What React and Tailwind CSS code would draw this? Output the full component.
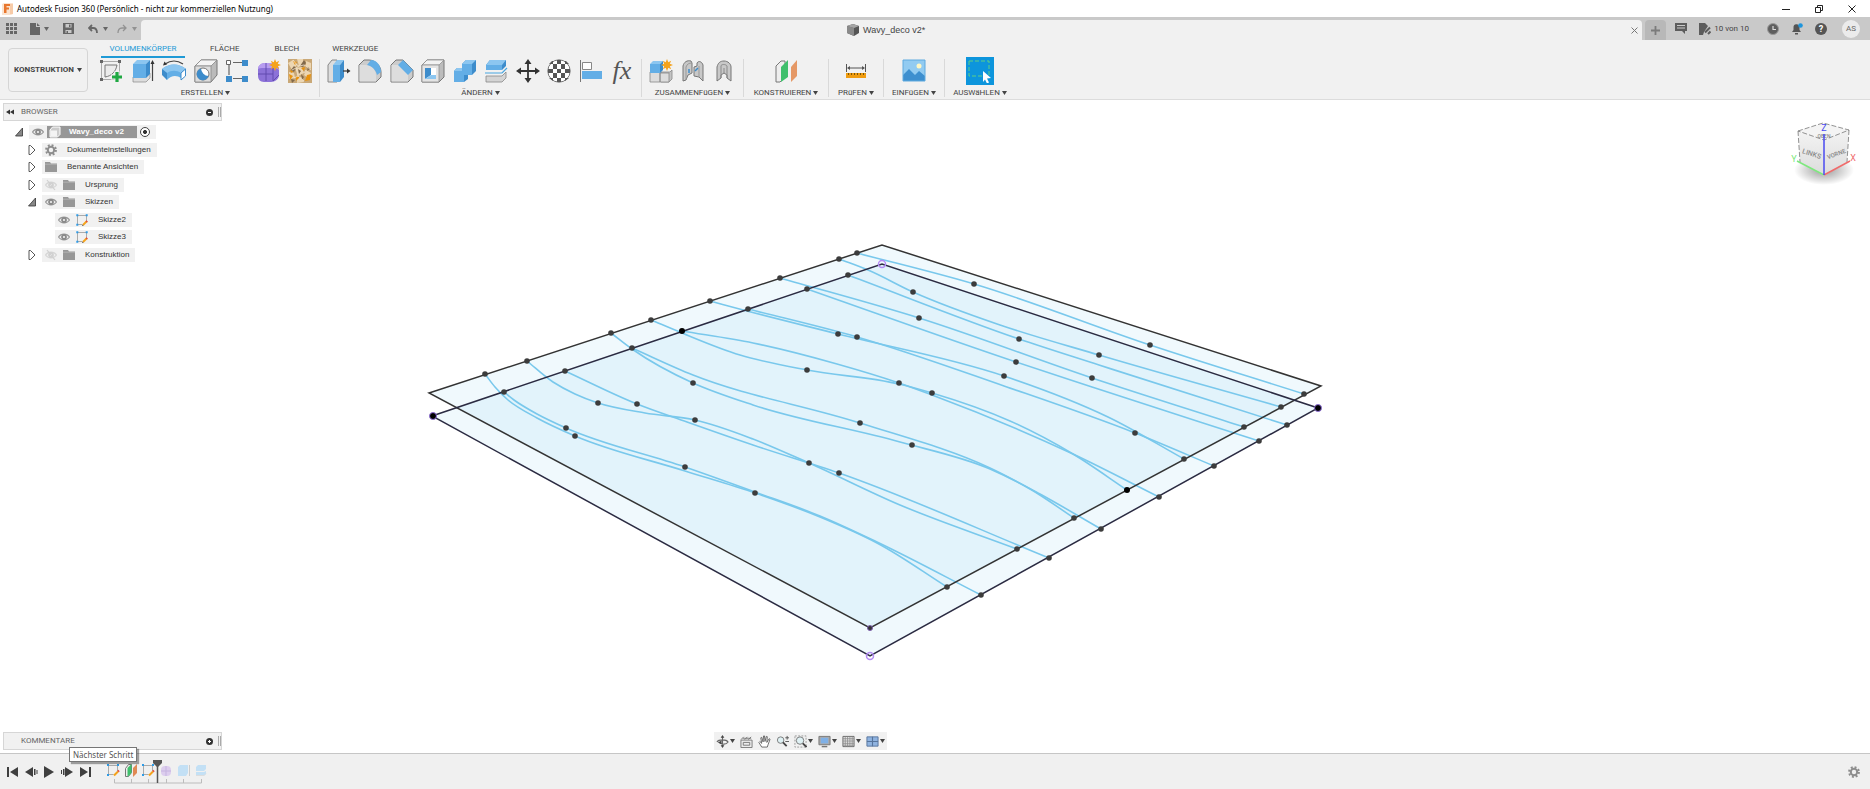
import { Fragment } from "react";

const sketchCurves = [
  // upper profile
  [[485, 374], [495, 387], [508, 400], [537, 418], [575, 436], [685, 471], [755, 493], [820, 517], [877, 543], [947, 587]],
  [[527, 361], [553, 382], [575, 394], [598, 403], [645, 413], [695, 420], [753, 439], [809, 463], [900, 505], [1017, 549]],
  [[611, 333], [632, 349], [693, 383], [753, 405], [900, 442], [990, 469], [1030, 489], [1074, 518]],
  [[651, 320], [682, 333], [740, 355], [807, 370], [899, 384], [932, 393], [1010, 421], [1073, 454], [1127, 490]],
  [[710, 301], [747, 311], [838, 334], [1004, 376], [1108, 417], [1184, 459]],
  [[780, 278], [919, 318], [1092, 378], [1244, 427]],
  [[839, 259], [868, 270], [913, 292], [1000, 325], [1099, 355], [1281, 407]],
  [[857, 253], [974, 284], [1150, 345], [1304, 394]],
  // lower profile
  [[504, 392], [514, 400], [537, 414], [566, 428], [685, 467], [755, 492], [820, 516], [877, 542], [981, 595]],
  [[565, 371], [637, 404], [687, 422], [753, 445], [839, 473], [1049, 558]],
  [[632, 348], [693, 375], [860, 423], [990, 468], [1040, 494], [1101, 529]],
  [[682, 331], [753, 343], [837, 364], [899, 383], [932, 395], [1073, 454], [1159, 497]],
  [[748, 309], [857, 337], [1004, 386], [1135, 433], [1214, 466]],
  [[807, 289], [1016, 362], [1092, 387], [1259, 441]],
  [[848, 275], [1019, 339], [1099, 365], [1287, 425]],
];

const sketchPoints = [
  [485, 374], [527, 361], [611, 333], [651, 320], [710, 301], [780, 278], [839, 259], [857, 253],
  [947, 587], [1017, 549], [1074, 518], [1184, 459], [1244, 427], [1281, 407], [1304, 394],
  [504, 392], [565, 371], [632, 348], [748, 309], [807, 289], [848, 275],
  [981, 595], [1049, 558], [1101, 529], [1159, 497], [1214, 466], [1259, 441], [1287, 425],
  [566, 428], [575, 436], [598, 403], [637, 404], [695, 420], [693, 383], [807, 370], [838, 334], [857, 337],
  [860, 423], [685, 467], [755, 493], [809, 463], [839, 473], [974, 284], [913, 292], [919, 318], [1019, 339],
  [1099, 355], [1150, 345], [1016, 362], [1092, 378], [1004, 376], [899, 383], [932, 393], [1135, 433], [912, 445],
];

// spline through the fit points, tangents weighted by chord length
function splinePath(pts) {
  const dist = (a, b) => Math.hypot(b[0] - a[0], b[1] - a[1]);
  const tangents = pts.map((p, i) => {
    const a = pts[i - 1];
    const b = pts[i + 1];
    if (!a) return [(b[0] - p[0]) / dist(p, b), (b[1] - p[1]) / dist(p, b)];
    if (!b) return [(p[0] - a[0]) / dist(a, p), (p[1] - a[1]) / dist(a, p)];
    const d0 = dist(a, p);
    const d1 = dist(p, b);
    return [0, 1].map((k) => (((p[k] - a[k]) / d0) * d1 + ((b[k] - p[k]) / d1) * d0) / (d0 + d1));
  });
  let d = `M${pts[0][0]} ${pts[0][1]}`;
  for (let i = 1; i < pts.length; i++) {
    const h = dist(pts[i - 1], pts[i]) / 3;
    const c1 = [pts[i - 1][0] + tangents[i - 1][0] * h, pts[i - 1][1] + tangents[i - 1][1] * h];
    const c2 = [pts[i][0] - tangents[i][0] * h, pts[i][1] - tangents[i][1] * h];
    d += `C${c1[0]} ${c1[1]} ${c2[0]} ${c2[1]} ${pts[i][0]} ${pts[i][1]}`;
  }
  return d;
}

const Caret = ({ className = "text-[#444]" }) => (
  <svg className={`w-[5px] h-1 shrink-0 ${className}`} viewBox="0 0 5 4">
    <path d="M0 0h5L2.5 4z" fill="currentColor" />
  </svg>
);

const Svg = ({ children, className = "w-6 h-6", box = "0 0 24 24" }) => (
  <svg className={`shrink-0 ${className}`} viewBox={box} fill="none">{children}</svg>
);

const Star = ({ x, y }) => (
  <path
    transform={`translate(${x} ${y})`}
    d="M0-6 1.3-2.8 4.2-4.2 2.8-1.3 6 0 2.8 1.3 4.2 4.2 1.3 2.8 0 6-1.3 2.8-4.2 4.2-2.8 1.3-6 0-2.8-1.3-4.2-4.2-1.3-2.8z"
    fill="#f5a31c"
  />
);

const BLUE = "#63aee6";
const BLUE_L = "#8cc6f0";
const BLUE_D = "#3d8ccb";

const icons = {
  sketch: (
    <Svg>
      <path d="M2.500 2.500h18v18h-18z" stroke="#999" strokeWidth=".8" />
      <path d="M6 18V6h12C17 12 13 17 6 18z" stroke="#777" fill="#ececec" />
      <path d="M1 1h3v3H1zM19 1h3v3h-3zM1 19h3v3H1z" fill="#666" />
      <path d="M18 12v12M12 18h12" stroke="#f1f1f1" strokeWidth="5" />
      <path d="M18 13v10M13 18h10" stroke="#1fa842" strokeWidth="3.200" />
    </Svg>
  ),
  extrude: (
    <Svg>
      <path d="M2 18h13l4-4v5l-4 4H2z" fill="#ddd" stroke="#888" strokeWidth=".7" />
      <path d="M2 5h13v14H2z" fill={BLUE} />
      <path d="M2 5l4-4h13l-4 4z" fill={BLUE_L} />
      <path d="M15 5l4-4v14l-4 4z" fill={BLUE_D} />
      <path d="M21.500 22V3" stroke="#444" strokeWidth="1.200" />
      <path d="M19.500 5l2-4 2 4z" fill="#333" />
    </Svg>
  ),
  revolve: (
    <Svg>
      <path d="M0 10c7-6 17-6 24 0l-5 9c-4-3-10-3-14 2z" fill={BLUE} />
      <path d="M0 10c7-6 17-6 24 0l-5 4c-4-3-10-3-14 0z" fill={BLUE_L} />
      <path d="M23.500 10v7L19 21v-7z" fill="#fff" stroke={BLUE_D} />
      <path d="M0 10v6l5 5v-7z" fill={BLUE_D} />
      <path d="M3 5C9 1 15 1 21 5" stroke="#444" strokeWidth="1.200" />
      <path d="M1 6.500l1.500-4 2.500 3z" fill="#333" />
    </Svg>
  ),
  hole: (
    <Svg>
      <path d="M1 7l6-6h16v15l-6 7H1z" fill="#bbb" stroke="#777" />
      <path d="M1 7l6-6h16l-6 6z" fill="#f4f4f4" stroke="#888" strokeWidth=".8" />
      <path d="M1 7h16v16H1z" fill="#ddd" stroke="#888" strokeWidth=".8" />
      <circle cx="9" cy="15" r="6" fill="#fff" stroke="#777" />
      <path d="M7 9.500a6 6 0 1 0 7.500 7.500A8 8 0 0 1 7 9.500z" fill={BLUE_D} />
    </Svg>
  ),
  pattern: (
    <Svg>
      <path d="M4 6v10M8 3.500h9M8 19.500h9" stroke="#666" strokeWidth="1.200" />
      <path d="M1.500 1.500h4v4h-4z" fill="#fff" stroke="#666" />
      <path d="M17 1h6v6h-6zM17 17h6v6h-6zM1 17h6v6H1z" fill={BLUE_D} />
    </Svg>
  ),
  form: (
    <Svg>
      <path d="M1 10c0-3 3-6 7-6h7c4 0 7 3 7 7v5c0 4-4 7-8 7H7c-4 0-6-3-6-6z" fill="#8c72d8" />
      <path d="M1 10c0-3 3-6 7-6h7c4 0 7 3 7 7-2-2-4-2-7-2H7c-3 0-5 0-6 1z" fill="#b79cf0" />
      <path d="M9 4v18M1 15h15M16 9v13l6-6" stroke="#5f48ad" strokeWidth=".9" />
      <Star x={18} y={6} />
    </Svg>
  ),
  voronoi: (
    <Svg>
      <path d="M0 0h24v24H0z" fill="#c9a877" />
      <path d="M0 4l5-3 4 5-5 5zM9 0h6l1 6-5 1zM18 2l5 2v6l-5-3zM8 9l6-1 2 6-6 3zM1 13l5 1 1 5-6 1zM18 11l5 3-3 5-4-3zM9 19l5-1 2 5-7 1z" fill="#ecd6b2" />
      <path d="M5 2l4 1-2 3zM13 9l4-1-1 4zM2 11l4 1-3 2zM19 16l4-1-1 6-5 1zM8 17l4 1-4 4zM1 15l4 2-3 4z" fill="#e8920e" />
      <path d="M16 1l2 3-3 4-3-1zM6 7l2 2-2 4-3-2zM13 15l3 3-2 3zM3 20l4 1-3 3zM20 8l2 2-3 2zM10 10l3 2-2 3z" fill="#80694b" />
      <path d="M5 1l4 5 2 1 5-1 2 1 5 4M4 11l4-2 3-2M8 9l2 8-4 2M16 14l2-3M10 17l6 5" stroke="#f3e6d0" strokeWidth=".8" />
    </Svg>
  ),
  pressPull: (
    <Svg>
      <path d="M1 6l4-5h5v22H1z" fill="#ddd" stroke="#888" />
      <path d="M6 6h7v17H6z" fill={BLUE} />
      <path d="M6 6l4-5h7l-4 5z" fill={BLUE_L} />
      <path d="M13 6l4-5v17l-4 5z" fill={BLUE_D} />
      <path d="M16 12h5" stroke="#333" strokeWidth="1.200" />
      <path d="M20 9.500l3.500 2.500-3.500 2.500z" fill="#333" />
    </Svg>
  ),
  fillet: (
    <Svg>
      <path d="M1 6l5-5h5c6 0 12 6 12 12v5l-5 5H1z" fill="#ccc" stroke="#777" />
      <path d="M1.500 6H8c6 0 10 5 10 11v5.500H1.500z" fill="#ddd" />
      <path d="M9 6l4-5c6 0 10 6 10 12l-4 3C18 11 14 7 9 6z" fill={BLUE} />
    </Svg>
  ),
  chamfer: (
    <Svg>
      <path d="M1 6l5-5h7l10 10v7l-5 5H1z" fill="#ccc" stroke="#777" />
      <path d="M1.500 6H9l9 9v7.500H1.500z" fill="#ddd" />
      <path d="M8 6l5-5 10 10-5 5z" fill={BLUE} />
    </Svg>
  ),
  shell: (
    <Svg>
      <path d="M1 6l5-5h17v17l-5 5H1z" fill="#bdbdbd" stroke="#777" />
      <path d="M1 6l5-5h17l-5 5z" fill="#f2f2f2" stroke="#888" strokeWidth=".7" />
      <path d="M1 6h17v17H1z" fill="#e4e4e4" stroke="#888" strokeWidth=".7" />
      <path d="M4 9h11v11H4z" fill="#fff" />
      <path d="M4 9h6v7l-6 4z" fill={BLUE_D} />
      <path d="M4 20l6-4h5v4z" fill={BLUE_L} />
    </Svg>
  ),
  combine: (
    <Svg>
      <path d="M1 12l3-3h5V5l4-4h10v11l-4 4h-4v4l-4 3H1z" fill={BLUE_D} />
      <path d="M1 12h8V5h10v11h-8v7H1z" fill={BLUE} />
      <path d="M1 12l3-3h5v3zM9 5l4-4h10l-4 4z" fill={BLUE_L} />
    </Svg>
  ),
  split: (
    <Svg>
      <path d="M2 6l4-5h16v6l-4 4H2z" fill={BLUE_D} />
      <path d="M2 6h16v5H2z" fill={BLUE} />
      <path d="M2 6l4-5h16l-4 5z" fill={BLUE_L} />
      <path d="M1 14h17l5-5" stroke="#48a6e0" strokeWidth="1.200" />
      <path d="M2 17h16l4-4v6l-4 4H2z" fill="#d4d4d4" stroke="#888" strokeWidth=".8" />
    </Svg>
  ),
  move: (
    <Svg>
      <path d="M12 3v18M3 12h18" stroke="#333" strokeWidth="1.800" />
      <path d="M12 0l3.500 5h-7zM12 24l3.500-5h-7zM0 12l5-3.500v7zM24 12l-5-3.500v7z" fill="#333" />
    </Svg>
  ),
  appearance: (
    <Svg>
      <circle cx="12" cy="12" r="11.200" fill="#fff" stroke="#777" />
      <path d="M10 1h4v4h-4zM6 5h4v5H6zM14 5h4v5h-4zM2 5l3-3h1v3zM22 5l-3-3h-1v3zM1 10h5v4H1zM10 10h4v4h-4zM18 10h5v4h-5zM6 14h4v5H6zM14 14h4v5h-4zM10 19h4v4h-4zM2 19h4v3zM22 19h-4v3z" fill="#555" />
    </Svg>
  ),
  align: (
    <Svg>
      <path d="M1.500 1v22" stroke="#777" />
      <path d="M3.500 3.500h9v7h-9z" fill="#fff" stroke="#888" />
      <path d="M3 12h20v8H3z" fill={BLUE} />
    </Svg>
  ),
  fx: (
    <span className="w-6 h-6 flex items-center justify-center font-['Liberation_Serif',serif] italic text-[26px] leading-6 text-[#555]">fx</span>
  ),
  newComponent: (
    <Svg>
      <path d="M12 13h9l2-2v9l-3 3h-8z" fill="#c4c4c4" stroke="#888" strokeWidth=".8" />
      <path d="M1 13h10v10H1zM11 14h9v9h-9z" fill="#ddd" stroke="#888" strokeWidth=".8" />
      <path d="M1 5h10v9H1z" fill={BLUE} />
      <path d="M1 5l3-3h10l-3 3z" fill={BLUE_L} />
      <path d="M11 5l3-3v9l-3 3z" fill={BLUE_D} />
      <Star x={18} y={6} />
    </Svg>
  ),
  joint: (
    <Svg>
      <path d="M2 22V7c1-4 4-6 8-5l1 2v10l-4 2-2 5z" fill="#c8c8c8" stroke="#777" />
      <path d="M5 21V8c1-3 3-4 6-4" stroke="#999" />
      <path d="M13 17V8l3-1V4c2-3 5-1 6 2v16l-4-4z" fill="#c8c8c8" stroke="#777" />
      <path d="M18 18V7" stroke="#999" />
      <path d="M8 14v-4M14 12l3-3" stroke={BLUE_D} strokeWidth="1.500" />
    </Svg>
  ),
  asBuilt: (
    <Svg>
      <path d="M5 22V8c1-4 3-6 7-6s7 3 7 6v14l-4-3v-3l-3-2-3 2v3z" fill="#c8c8c8" stroke="#777" />
      <path d="M9 19V7c0-2 5-2 6 0v12" stroke="#8a8a8a" />
      <path d="M12 14V9" stroke="#8a8a8a" />
    </Svg>
  ),
  construct: (
    <Svg>
      <path d="M2 7l5-5h4v16l-5 5H2z" fill="#eee" stroke="#777" />
      <path d="M7 8l7-7v17l-7 5z" fill="#3fbf6c" />
      <path d="M17 8l6-7v16l-6 6z" fill="#e59866" />
    </Svg>
  ),
  measure: (
    <Svg>
      <path d="M2.500 5v8M21.500 5v8M4 9h16" stroke="#555" />
      <path d="M3 9l3-2v4zM21 9l-3-2v4z" fill="#555" />
      <path d="M2 14h20v5H2z" fill="#f09c10" />
      <path d="M4.500 14v2M7.500 14v2M10.500 14v2M13.500 14v2M16.500 14v2M19.500 14v2" stroke="#7a5408" />
    </Svg>
  ),
  insert: (
    <Svg>
      <path d="M1 1h22v21H1z" fill="#92cbf1" />
      <path d="M1 16l6-6 6 6 4-4 6 5v5H1z" fill="#3d8fcf" />
      <circle cx="17" cy="7" r="2.500" fill="#fff7c4" />
      <path d="M1 1h22v21H1z" stroke="#5faadf" />
    </Svg>
  ),
  select: (
    <span className="w-7 h-7 -my-0.5 flex items-center justify-center bg-[#0d95dc]">
      <Svg>
        <path d="M1 2h20v15H1z" stroke="#5fcf86" strokeDasharray="4 2" />
        <path d="M15 12l8 7-4 .5 2 4-2 1-2-4-2 2.500z" fill="#fff" />
      </Svg>
    </span>
  ),
};

const groups = [
  { label: "ERSTELLEN", width: "w-[213px]", items: ["sketch", "extrude", "revolve", "hole", "pattern", "form", "voronoi"] },
  { label: "ÄNDERN", width: "w-[307px]", items: ["pressPull", "fillet", "chamfer", "shell", "combine", "split", "move", "appearance", "align", "fx"] },
  { label: "ZUSAMMENFüGEN", width: "w-[87px]", items: ["newComponent", "joint", "asBuilt"] },
  { label: "KONSTRUIEREN", width: "w-[70px]", items: ["construct"] },
  { label: "PRüFEN", width: "w-10", items: ["measure"] },
  { label: "EINFüGEN", width: "w-[46px]", items: ["insert"] },
  { label: "AUSWäHLEN", width: "w-14", items: ["select"] },
];

const Eye = ({ off }) => (
  <Svg className="w-3 h-3" box="0 0 12 12">
    <g opacity={off ? 0.3 : 1}>
      <path d="M.5 6C3 2.200 9 2.200 11.500 6 9 9.800 3 9.800.5 6z" stroke="#999" strokeWidth="1.200" />
      <circle cx="6" cy="6" r="2" stroke="#8a8a8a" strokeWidth="1.800" />
      {off && <path d="M2 1l8 10" stroke="#888" strokeWidth="1.200" />}
    </g>
  </Svg>
);

const Folder = () => (
  <Svg className="w-3 h-3" box="0 0 12 12">
    <path d="M0 1h5l1 1.500h6V11H0z" fill="#979797" />
    <path d="M0 3.200h12" stroke="#c4c4c4" strokeWidth=".6" />
  </Svg>
);

const GearIcon = ({ className }) => (
  <Svg className={className} box="0 0 12 12">
    <circle cx="6" cy="6" r="4.900" stroke="#8d8d8d" strokeWidth="2" strokeDasharray="1.950 1.900" />
    <circle cx="6" cy="6" r="3.200" stroke="#8d8d8d" strokeWidth="2" />
  </Svg>
);

const SketchIcon = ({ className = "w-3 h-3" }) => (
  <Svg className={className} box="0 0 12 12">
    <path d="M1.500 1.500h9v7M1.500 1.500v9H6" stroke="#999" strokeWidth=".8" />
    <path d="M.3.300h2v2h-2zM9.700.300h2v2h-2zM.3 9.700h2v2h-2z" fill="#2e9be6" />
    <path d="M7 11l3.500-3.500" stroke="#f5a31c" strokeWidth="2" />
    <path d="M10.300 7.800l.9-1" stroke="#e34a3c" strokeWidth="2" />
    <path d="M6 12l1.600-.6-.9-.9z" fill="#333" />
  </Svg>
);

const Twist = ({ open }) => (
  <button aria-label={open ? "Zuklappen" : "Aufklappen"} className="w-2 h-3 mr-1.5 flex items-center">
    <Svg className="w-2 h-3" box="0 0 8 12">
      {open ? <path d="M7.500 2v8H.5z" fill="#888" stroke="#333" strokeWidth=".8" /> : <path d="M1 1.500h1.500L7 6l-4.500 4.500H1z" fill="#fff" stroke="#555" />}
    </Svg>
  </button>
);

const nodes = [
  { label: "Dokumenteinstellungen", icon: "gear" },
  { label: "Benannte Ansichten", icon: "folder" },
  { label: "Ursprung", icon: "folder", eye: "off" },
  { label: "Skizzen", icon: "folder", eye: "on", open: true },
  { label: "Skizze2", icon: "sketch", eye: "on", leaf: true },
  { label: "Skizze3", icon: "sketch", eye: "on", leaf: true },
  { label: "Konstruktion", icon: "folder", eye: "off" },
];

function BrowserTree() {
  return (
    <ul className="h-[137px] mt-1 flex flex-col justify-between items-start text-[#333]">
      <li className="flex items-center h-3.5 pl-[15px]">
        <Twist open />
        <div className="h-3.5 flex items-center bg-[#f1f1f1] pl-[3px] pr-1.5 gap-[3px]">
          <Eye />
          <div className="h-3 flex items-center bg-[#979797] w-[90px] pl-0.5 gap-2">
            <Svg className="w-3 h-3" box="0 0 12 12">
              <path d="M1 4l2.500-3H11v7.500L8.500 11H1z" fill="#ccc" stroke="#fff" />
              <path d="M1.500 4.500h6.500v6H1.500z" fill="#f4f4f4" />
            </Svg>
            <span className="font-bold text-white">Wavy_deco v2</span>
          </div>
          <input type="radio" name="active" aria-label="Wavy_deco v2 aktivieren" defaultChecked className="appearance-none w-2.5 h-2.5 rounded-full border border-[#444] bg-[radial-gradient(circle,#333_30%,#fff_40%)]" />
        </div>
      </li>
      {nodes.map((n) => (
        <li key={n.label} className={`flex items-center h-3.5 ${n.leaf ? "pl-[55px]" : "pl-7"}`}>
          {!n.leaf && <Twist open={n.open} />}
          <div className="h-3.5 flex items-center bg-[#f1f1f1] pl-[3px] pr-1.5">
            {n.eye && (
              <button aria-label={`${n.label} ein- oder ausblenden`} className="mr-1.5">
                <Eye off={n.eye === "off"} />
              </button>
            )}
            {n.icon === "gear" && <GearIcon className="w-3 h-3" />}
            {n.icon === "folder" && <Folder />}
            {n.icon === "sketch" && <SketchIcon />}
            <span className="ml-2.5">{n.label}</span>
          </div>
        </li>
      ))}
    </ul>
  );
}

function PanelHeader({ title, action, children, arrow }) {
  return (
    <div className="ml-[3px] w-[219px] h-[18px] flex items-center bg-[#f1f1f1] border border-[#d6d6d6] pl-0.5 font-['Roboto',sans-serif] text-[#666]">
      <button aria-label="Einklappen" className="w-[15px] h-3 flex items-center">
        {arrow && (
          <Svg className="w-2 h-1.5" box="0 0 8 6">
            <path d="M4 .5v5L0 3zM8 .5v5L4 3z" fill="#333" />
          </Svg>
        )}
      </button>
      <h2 className="flex-1">{title}</h2>
      <button aria-label={action}>
        <Svg className="w-[7px] h-[7px]" box="0 0 7 7">
          <circle cx="3.500" cy="3.500" r="3.500" fill="#333" />
          {children}
        </Svg>
      </button>
      <span className="ml-[5px] w-[3px] h-2.5 border-l border-r border-[#aaa]" />
    </div>
  );
}

function SketchCanvas() {
  return (
    <svg className="absolute inset-0 w-full h-full" viewBox="0 100 1870 653" fill="none">
      <path d="M429 393L882 245 1321 386 870 628z" fill="#2fa4e7" fillOpacity=".07" />
      <path d="M432 416L882 264 1318 408 870 656z" fill="#2fa4e7" fillOpacity=".07" />
      {sketchCurves.map((pts, i) => (
        <path key={i} d={splinePath(pts)} stroke="#79c8ec" strokeWidth="1.600" />
      ))}
      <path d="M429 393L882 245 1321 386 870 628z" stroke="#333" strokeWidth="1.500" />
      <path d="M432 416L882 264 1318 408 870 656z" stroke="#2b2b42" strokeWidth="1.500" />
      {sketchPoints.map(([x, y]) => (
        <circle key={`${x}-${y}`} cx={x} cy={y} r="2.800" fill="#3c3c3c" />
      ))}
      <circle cx="682" cy="331" r="3" fill="#000" />
      <circle cx="1127" cy="490" r="3" fill="#000" />
      <circle cx="433" cy="416" r="3.500" fill="#000" stroke="#8f6fd8" />
      <circle cx="1318" cy="408" r="3.500" fill="#000" stroke="#8f6fd8" />
      <circle cx="870" cy="628" r="2.500" fill="#333" stroke="#7d5fae" />
      <circle cx="882" cy="264" r="3.500" stroke="#b48cf5" strokeWidth="1.500" />
      <circle cx="870" cy="656" r="3.500" stroke="#b48cf5" strokeWidth="1.500" />
    </svg>
  );
}

function ViewCube() {
  return (
    <svg className="absolute right-2.5 top-[18px] w-[72px] h-[68px]" viewBox="1788 118 72 68" fill="none">
      <defs>
        <radialGradient id="cube-shadow">
          <stop offset="0" stopColor="#000" stopOpacity=".4" />
          <stop offset="1" stopColor="#000" stopOpacity="0" />
        </radialGradient>
        <linearGradient id="cube-face" x2="0" y2="1">
          <stop offset="0" stopColor="#f3f3f3" />
          <stop offset="1" stopColor="#dcdcdc" />
        </linearGradient>
      </defs>
      <ellipse cx="1824" cy="170" rx="30" ry="15" fill="url(#cube-shadow)" />
      <path d="M1798 131l26 9v36l-24-14z" fill="url(#cube-face)" />
      <path d="M1849 130l-25 10v36l23-14z" fill="url(#cube-face)" />
      <path d="M1798 131l25-8 26 7-25 10z" fill="#f4f4f4" />
      <path d="M1798 131l25-8 26 7-25 10zM1798 131l2 31M1849 130l-2 32" stroke="#777" strokeWidth=".8" strokeDasharray="5 2" />
      <g fontFamily="Roboto, sans-serif" fontWeight="500" fill="#888" textAnchor="middle">
        <text x="1824" y="138" fontSize="5">OBEN</text>
        <text transform="translate(1811 156) rotate(18)" fontSize="7">LINKS</text>
        <text transform="translate(1837 156) rotate(-20)" fontSize="6">VORNE</text>
      </g>
      <path d="M1824 175l-27-14" stroke="#7de87d" strokeWidth="1.500" />
      <path d="M1824 175l26-14" stroke="#f06a6a" strokeWidth="1.500" />
      <path d="M1824 175v-41" stroke="#4a4af0" strokeWidth="1.500" />
      <g fontFamily="Roboto, sans-serif" fontSize="9" textAnchor="middle">
        <text x="1824" y="131" fill="#4a4af0">Z</text>
        <text x="1794" y="162" fill="#7de87d">Y</text>
        <text x="1853" y="161" fill="#f06a6a">X</text>
      </g>
    </svg>
  );
}

const navTools = [
  {
    label: "Orbit",
    menu: true,
    icon: (
      <>
        <path d="M7 1v12M1 7.500c2-3 10-3 12 0-2 3-7 3-9 1" stroke="#666" strokeWidth="1.200" />
        <path d="M5 3l2-3 2 3zM5 11l2 3 2-3zM2 8l4-2v4z" fill="#444" />
      </>
    ),
  },
  {
    label: "Ansicht nach",
    icon: (
      <>
        <path d="M1 5.500h12v8H1zM3.500 8h7v3h-7z" stroke="#777" fill="#ececec" />
        <path d="M1 5l3-3M5 5l3-3M9 5l3-3M3 3.500h9" stroke="#777" />
      </>
    ),
  },
  {
    label: "Pan",
    icon: <path d="M4 13L1 8l1-1 2 2-1-6 1-.5 1.500 5L6 1h1l.5 6L9 1.500l1 .3L9.500 8 12 4l1 .5L11 10l-1 3z" stroke="#555" fill="#fff" strokeWidth=".9" />,
  },
  {
    label: "Zoom",
    icon: (
      <>
        <circle cx="5" cy="5.500" r="3.500" stroke="#777" fill="#dff1f4" />
        <path d="M7.500 8l4 4" stroke="#444" strokeWidth="2" />
        <path d="M10 3h4M12 1v4M10 7h4" stroke="#555" />
      </>
    ),
  },
  {
    label: "Fenster zoomen",
    menu: true,
    icon: (
      <>
        <path d="M1 1h12v12H1z" stroke="#999" strokeDasharray="2 1.500" />
        <circle cx="6.500" cy="6" r="4" stroke="#777" fill="#dff1f4" />
        <path d="M9.500 9l4 4" stroke="#444" strokeWidth="2" />
      </>
    ),
  },
  {
    label: "Anzeigeeinstellungen",
    menu: true,
    icon: (
      <>
        <path d="M1 1.500h12v9H1z" fill="#aaa" stroke="#777" />
        <path d="M3 3h8v6H3z" fill="#7fb0e6" />
        <path d="M4 12.500h6" stroke="#777" strokeWidth="1.500" />
      </>
    ),
  },
  {
    label: "Raster",
    menu: true,
    icon: (
      <>
        <path d="M1 1.500h12v11H1z" fill="#e4e4e4" stroke="#666" />
        <path d="M3.500 2v11M6 2v11M8.500 2v11M11 2v11M1 4h12M1 6.500h12M1 9h12M1 11h12" stroke="#888" strokeWidth=".8" />
      </>
    ),
  },
  {
    label: "Ansichtsfenster",
    menu: true,
    icon: (
      <>
        <path d="M1 2h12v10H1z" fill="#8fb3e0" stroke="#56749c" />
        <path d="M7 2v10M1 7h12" stroke="#56749c" strokeWidth="1.200" />
      </>
    ),
  },
];

const playback = [
  { label: "Zum Anfang", d: "M1 2h2v10H1zM12 2v10L4 7z" },
  { label: "Vorheriger Schritt", d: "M9 2v10L1 7zM10 4h1.500v6H10zM12.500 5h1v4h-1z" },
  { label: "Wiedergeben", d: "M2 1v12l10-6z" },
  { label: "Nächster Schritt", d: "M5 2v10l8-5zM3 4h1.500v6H3zM1 5h1v4H1z" },
  { label: "Zum Ende", d: "M11 2h2v10h-2zM2 2v10l8-5z" },
];

function Timeline() {
  return (
    <footer className="relative h-9 flex items-center justify-between border-t border-[#c6c6c6] bg-[#f0f0f0] pl-1.5 pr-2.5">
      <div className="flex items-center">
        <div className="flex items-center gap-1">
          {playback.map((b) => (
            <button key={b.label} aria-label={b.label}>
              <Svg className="w-3.5 h-3.5" box="0 0 14 14">
                <path d={b.d} fill="#3f3f3f" />
              </Svg>
            </button>
          ))}
        </div>
        <svg className="ml-3 w-[106px] h-7" viewBox="103 758 106 28" fill="none">
          <path d="M113.500 779v4h87v-4M130.500 779v4M147.500 779v4M165.500 779v4M182.500 779v4" stroke="#bcbcbc" />
          <path d="M107.500 765.500h9v6M107.500 765.500v9h5M142.500 765.500h9v6M142.500 765.500v9h5" stroke="#999" strokeWidth=".8" />
          <path d="M106 764h2v2h-2zM116 764h2v2h-2zM106 774h2v2h-2zM141 764h2v2h-2zM151 764h2v2h-2zM141 774h2v2h-2z" fill="#2e9be6" />
          <path d="M113 775.500l4-4M148 775.500l4-4" stroke="#f5a31c" strokeWidth="2" />
          <path d="M117 771.500l1-1M152 771.500l1-1" stroke="#e34a3c" strokeWidth="2" />
          <path d="M124.500 768.500l3-4h3v8l-3 4h-3z" fill="#eee" stroke="#777" />
          <path d="M126.500 768l4-4v9l-4 4z" fill="#3fbf6c" />
          <path d="M132 768l4-4v9l-4 4z" fill="#e08a55" />
          <rect x="160" y="766" width="10" height="10" rx="4" fill="#dccdee" />
          <path d="M165 766v10M160 771h10" stroke="#c5b4df" />
          <path d="M177 767l2-2h8v8l-2 3h-8z" fill="#c3e0f5" />
          <path d="M188.500 765v11" stroke="#ccc" />
          <path d="M195 767l2-2h8v4l-2 2h-8zM195 772h8l2-1v3l-2 2h-8z" fill="#c3e0f5" />
          <path d="M195 775.500h8l2-2" stroke="#ddd" />
          <path d="M156.500 764v19" stroke="#555" strokeWidth="1.500" />
          <path d="M152 760h9v3l-4 4h-1l-4-4z" fill="#555" />
        </svg>
      </div>
      <button aria-label="Einstellungen">
        <GearIcon className="w-3 h-3" />
      </button>
      <div role="tooltip" className="absolute left-[69px] -top-[7px] h-[15px] px-[3px] flex items-center bg-white border border-[#767676] shadow-[2px_2px_1px_rgba(0,0,0,0.35)] font-['Noto_Sans',sans-serif] text-[#555]">
        Nächster Schritt
      </div>
    </footer>
  );
}

function TitleBar() {
  return (
    <header className="h-[17px] flex items-center justify-between bg-white pl-0.5 pr-3.5">
      <div className="flex items-center gap-1">
        <Svg className="w-[11px] h-3" box="0 0 11 12">
          <path d="M0 1l2-1h9v11l-2 1H0z" fill="#fbe3cf" />
          <path d="M2 10V1h6v2H4.500v1.500H7v2H4.500V10z" fill="#e8762d" />
          <path d="M8 1h3v10H8z" fill="#f7cba8" />
        </Svg>
        <h1 className="font-['Noto_Sans',sans-serif] text-black">Autodesk Fusion 360 (Persönlich - nicht zur kommerziellen Nutzung)</h1>
      </div>
      <div className="flex items-center gap-[25px]">
        <button aria-label="Minimieren">
          <Svg className="w-2 h-2" box="0 0 8 8"><path d="M0 4.500h8" stroke="#222" /></Svg>
        </button>
        <button aria-label="Verkleinern">
          <Svg className="w-2 h-2" box="0 0 8 8"><path d="M.5 2.500h5v5h-5zM2.500 2.500v-2h5v5h-2" stroke="#222" /></Svg>
        </button>
        <button aria-label="Schließen">
          <Svg className="w-2 h-2" box="0 0 8 8"><path d="M.5.500l7 7M7.500.500l-7 7" stroke="#222" /></Svg>
        </button>
      </div>
    </header>
  );
}

function DocumentBar() {
  return (
    <div className="h-[23px] flex bg-[#c9c9c9] text-[#666]">
      <div className="w-[141px] flex items-center pl-1.5 pr-[5px]">
        <button aria-label="Datenbereich">
          <Svg className="w-[11px] h-[11px]" box="0 0 11 11">
            <path d="M0 0h3v3H0zM4 0h3v3H4zM8 0h3v3H8zM0 4h3v3H0zM4 4h3v3H4zM8 4h3v3H8zM0 8h3v3H0zM4 8h3v3H4zM8 8h3v3H8z" fill="currentColor" />
          </Svg>
        </button>
        <button aria-label="Datei" className="ml-[13px] flex items-center gap-1">
          <Svg className="w-2.5 h-3" box="0 0 10 12"><path d="M0 0h6v4h4v8H0zM7 0l3 3H7z" fill="currentColor" /></Svg>
          <Caret className="text-[#666]" />
        </button>
        <button aria-label="Speichern" className="ml-[14px]">
          <Svg className="w-[11px] h-[11px]" box="0 0 11 11">
            <path d="M0 0h11v11H0z" fill="currentColor" />
            <path d="M2.500 1h6v3.500h-6zM2.500 7h6v3h-6z" fill="#c9c9c9" />
            <path d="M6 1.500h1.500V4H6zM3.500 8H5v2H3.500z" fill="currentColor" />
          </Svg>
        </button>
        <button aria-label="Rückgängig" className="ml-[14px] flex items-center gap-[5px]">
          <Svg className="w-2.5 h-[9px]" box="0 0 10 9"><path d="M4 1L1 4l3 3M1 4h4c3 0 4 2 4 5" stroke="currentColor" strokeWidth="1.800" /></Svg>
          <Caret className="text-[#666]" />
        </button>
        <button aria-label="Wiederherstellen" className="ml-[9px] flex items-center gap-[5px] text-[#929292]">
          <Svg className="w-2.5 h-[9px]" box="0 0 10 9"><path d="M6 1l3 3-3 3M9 4H5C2 4 1 6 1 9" stroke="currentColor" strokeWidth="1.300" /></Svg>
          <Caret className="text-[#929292]" />
        </button>
      </div>
      <div className="flex-1 mt-[3px] flex items-center bg-[#f1f1f1] rounded-t-sm pr-1">
        <div className="flex-1 flex items-center justify-center gap-1 font-['Liberation_Sans',sans-serif] text-[9px] leading-3 text-[#444]">
          <Svg className="w-3 h-3" box="0 0 12 12">
            <path d="M0 2l6-2 6 2v7l-5 3-7-3z" fill="#555" />
            <path d="M0 2l7 2v8L0 9z" fill="#8a8a8a" />
            <path d="M0 2l6-2 6 2-5 2z" fill="#a5a5a5" />
          </Svg>
          Wavy_deco v2*
        </div>
        <button aria-label="Dokument schließen">
          <Svg className="w-[7px] h-[7px]" box="0 0 7 7"><path d="M.5.500l6 6M6.500.500l-6 6" stroke="#777" /></Svg>
        </button>
      </div>
      <div className="flex items-center pl-[3px] pr-2.5">
        <button aria-label="Neues Dokument" className="w-[21px] h-5 self-end flex items-center justify-center bg-[#b8b8b8] rounded-t-sm">
          <Svg className="w-[9px] h-[9px]" box="0 0 9 9"><path d="M4.500 0v9M0 4.500h9" stroke="#7b7b7b" strokeWidth="1.800" /></Svg>
        </button>
        <button aria-label="Mitteilungen" className="ml-[9px]">
          <Svg className="w-3 h-[11px]" box="0 0 12 11">
            <path d="M0 0h12v8h-2v3L7 8H0z" fill="#5c5c5c" />
            <path d="M2 2.500h8M2 5h8" stroke="#c9c9c9" />
          </Svg>
        </button>
        <button className="ml-3 flex items-center gap-[3px] font-['Roboto',sans-serif] text-[#444]">
          <Svg className="w-3 h-3" box="0 0 12 12">
            <path d="M0 0h6l3 3-4 6-1 3H0z" fill="#5c5c5c" />
            <path d="M6 9.500l5-5M9 11l2.500-2.500" stroke="#5c5c5c" strokeWidth="2" />
          </Svg>
          10 von 10
        </button>
        <button aria-label="Auftragsstatus" className="ml-[18px]">
          <Svg className="w-3 h-3" box="0 0 12 12">
            <circle cx="6" cy="6" r="5.500" fill="#5f5f5f" stroke="#999" />
            <path d="M6 3v3.500h3" stroke="#ddd" strokeWidth="1.200" />
          </Svg>
        </button>
        <button aria-label="Benachrichtigungen" className="ml-3">
          <Svg className="w-3 h-3" box="0 0 12 12">
            <path d="M1 9l1.500-2V4.500A3 3 0 0 1 8.500 4v3L10 9zM4 10h3v1.500H4z" fill="#555" />
            <circle cx="9.500" cy="2.500" r="2.300" fill="#1c95dd" />
          </Svg>
        </button>
        <button aria-label="Hilfe" className="ml-3 w-3 h-3 rounded-full bg-[#555] text-white font-['Roboto',sans-serif] font-bold text-[9px] leading-3">?</button>
        <button className="ml-[15px] w-[18px] h-[18px] rounded-full bg-[#ebebeb] font-['Roboto',sans-serif] text-[#666]">AS</button>
      </div>
    </div>
  );
}

function Ribbon() {
  const tab = "h-[18px] pt-0.5 flex items-center border-b-2";
  return (
    <nav className="h-[60px] flex bg-[#f1f1f1] border-b border-[#dcdcdc] font-['Roboto',sans-serif] text-[#444]">
      <label className="mt-2 ml-2 w-20 h-11 px-[5px] flex items-center justify-between border border-[#d5d5d5] rounded-sm">
        <select aria-label="Arbeitsbereich" className="appearance-none bg-transparent font-bold outline-none">
          <option>KONSTRUKTION</option>
        </select>
        <Caret />
      </label>
      <div className="ml-1">
        <div className="flex pl-[9px]">
          <button className={`${tab} w-[84px] justify-center border-[#1f9ad6] text-[#1f9ad6]`}>VOLUMENKÖRPER</button>
          <button className={`${tab} ml-[25px] border-transparent`}>FLÄCHE</button>
          <button className={`${tab} ml-[35px] border-transparent`}>BLECH</button>
          <button className={`${tab} ml-[33px] border-transparent`}>WERKZEUGE</button>
        </div>
        <div className="flex pt-px">
          {groups.map((g, i) => (
            <Fragment key={g.label}>
              {i > 0 && <span className="w-px h-[38px] bg-[#d9d9d9]" />}
              <div className="px-[7px] flex flex-col items-center">
                <div className={`h-6 flex items-center ${g.width} ${g.items.length > 1 ? "justify-between" : "justify-center"}`}>
                  {g.items.map((name) => (
                    <button key={name} aria-label={name}>{icons[name]}</button>
                  ))}
                </div>
                <button className="mt-1 flex items-center gap-0.5 whitespace-nowrap">
                  {g.label}
                  <Caret />
                </button>
              </div>
            </Fragment>
          ))}
        </div>
      </div>
    </nav>
  );
}

export default function App() {
  return (
    <div className="min-h-screen flex flex-col bg-white font-['Liberation_Sans',sans-serif] text-[8px] leading-3">
      <TitleBar />
      <DocumentBar />
      <Ribbon />
      <main className="relative flex-1 flex flex-col justify-between">
        <SketchCanvas />
        <ViewCube />
        <section className="relative self-start pt-[3px]">
          <PanelHeader title="BROWSER" action="Optionen" arrow>
            <path d="M2 3.500h3" stroke="#fff" />
          </PanelHeader>
          <BrowserTree />
        </section>
        <div className="relative flex items-center pb-[3px]">
          <PanelHeader title="KOMMENTARE" action="Kommentar hinzufügen">
            <path d="M2 3.500h3M3.500 2v3" stroke="#fff" />
          </PanelHeader>
          <div className="grow" />
          <div className="h-[18px] px-0.5 flex items-center gap-[5px] bg-[#f1f1f1]">
            {navTools.map((t) => (
              <button key={t.label} aria-label={t.label} className="flex items-center gap-px">
                <Svg className="w-[13px] h-[13px]" box="0 0 14 14">{t.icon}</Svg>
                {t.menu && <Caret />}
              </button>
            ))}
          </div>
          <div className="grow-2" />
        </div>
      </main>
      <Timeline />
    </div>
  );
}
